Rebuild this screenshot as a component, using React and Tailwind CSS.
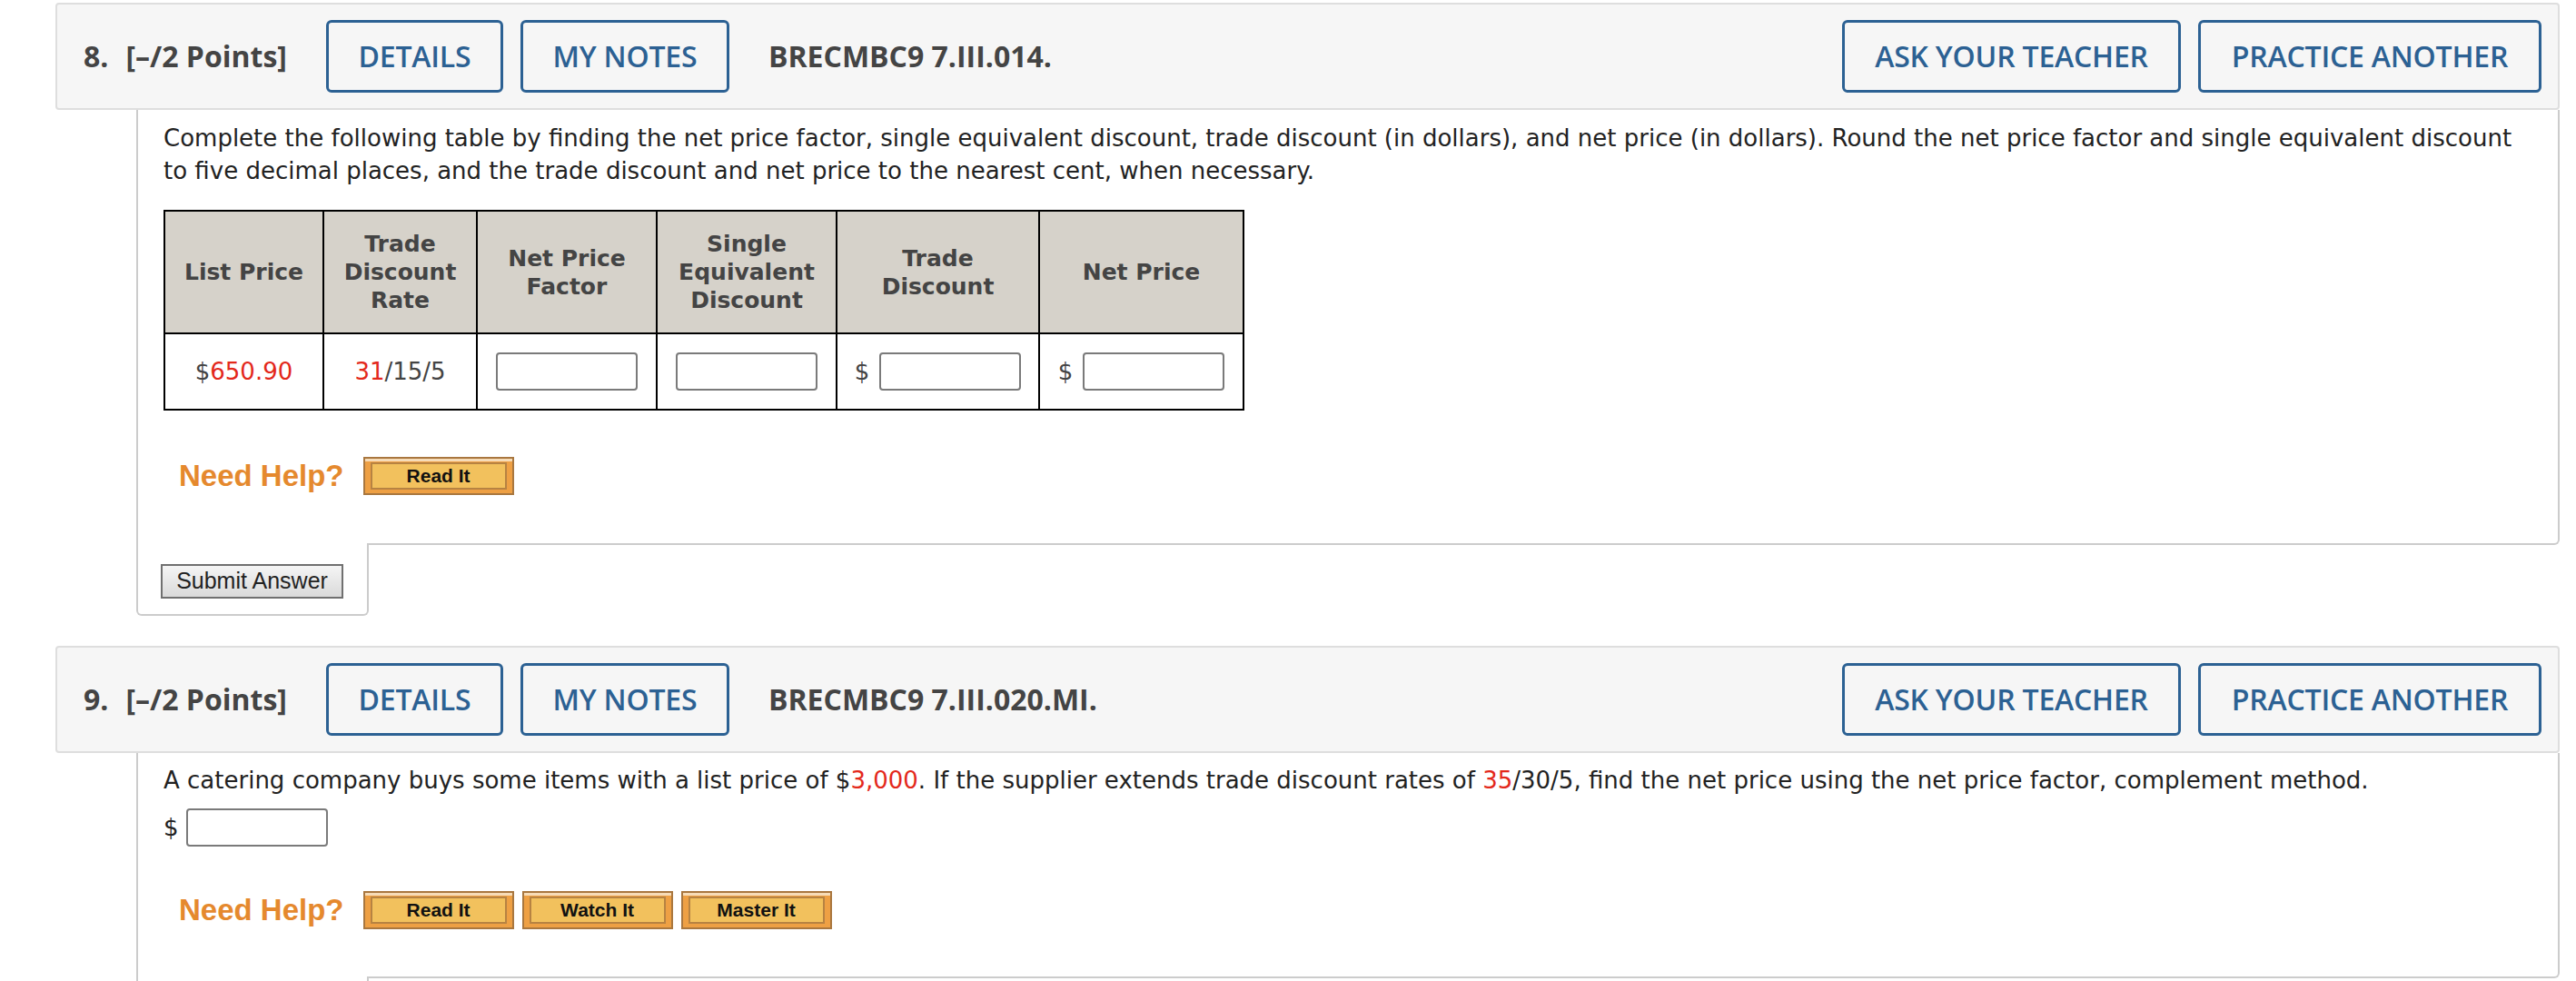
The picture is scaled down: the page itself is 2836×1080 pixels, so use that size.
import React from "react";

const RED = "text-[#e3281b]";

function OBtn({ w, children }) {
  return (
    <div
      className={`${w} h-[80px] shrink-0 flex items-center justify-center border-[3px] border-[#2c6193] rounded-[6px] text-[#2c6193] text-[32px] font-semibold font-['Open_Sans',sans-serif] tracking-[-0.2px]`}
    >
      {children}
    </div>
  );
}

function QHeader({ num, code }) {
  return (
    <div className="flex items-center h-[118px] border-2 border-[#dedede] bg-[#f6f6f6] rounded-[4px] pl-[29px] pr-[18px] font-['Open_Sans',sans-serif] text-[#444]">
      <span className="text-[32px] font-bold">{num}.</span>
      <span className="ml-[19px] text-[32px] font-bold">[–/2 Points]</span>
      <div className="ml-[43px]">
        <OBtn w="w-[195px]">DETAILS</OBtn>
      </div>
      <div className="ml-[19px]">
        <OBtn w="w-[230px]">MY NOTES</OBtn>
      </div>
      <span className="ml-[43px] text-[32px] font-bold">{code}</span>
      <div className="ml-auto flex gap-[19px]">
        <OBtn w="w-[373px]">ASK YOUR TEACHER</OBtn>
        <OBtn w="w-[378px]">PRACTICE ANOTHER</OBtn>
      </div>
    </div>
  );
}

function HelpBtn({ children }) {
  return (
    <div className="w-[166px] h-[42px] border-2 border-[#a9773f] bg-[#eea044] shadow-[inset_0_3px_0_#f6dcb8] px-[6px] pt-[4px] pb-[4px] shrink-0">
      <div className="h-full border-2 border-[#b78342] bg-[#f2c15d] flex items-center justify-center font-['Liberation_Sans',Arial,sans-serif] font-bold text-[21px] text-[#111]">
        {children}
      </div>
    </div>
  );
}

function NeedHelp({ buttons }) {
  return (
    <div className="flex items-center ml-[17px]">
      <span className="font-['Liberation_Sans',Arial,sans-serif] font-bold text-[33px] leading-[42px] text-[#e5892e] mr-[21px]">
        Need Help?
      </span>
      <div className="flex gap-[9px]">
        {buttons.map((b) => (
          <HelpBtn key={b}>{b}</HelpBtn>
        ))}
      </div>
    </div>
  );
}

function Input({ w = "w-[156px]" }) {
  return (
    <span
      className={`inline-block align-middle ${w} h-[42px] border-2 border-[#7a7a7a] rounded-[4px] bg-white`}
    ></span>
  );
}

function Submit() {
  return (
    <div className="w-[201px] h-[38px] border-2 border-[#707070] bg-gradient-to-b from-[#f5f5f5] to-[#dadada] flex items-center justify-center font-['Liberation_Sans',Arial,sans-serif] text-[25px] text-[#222]">
      Submit Answer
    </div>
  );
}

function Table() {
  const th =
    "border-2 border-black bg-[#d6d2ca] text-[#444] font-bold text-[25px] leading-[31px] text-center align-middle";
  const td = "border-2 border-black text-center align-middle text-[#444] text-[26px]";
  return (
    <table className="table-fixed border-collapse border-2 border-black w-[1190px] mt-[25px]">
      <colgroup>
        <col className="w-[175px]" />
        <col className="w-[169px]" />
        <col className="w-[198px]" />
        <col className="w-[198px]" />
        <col className="w-[223px]" />
        <col className="w-[225px]" />
      </colgroup>
      <thead>
        <tr className="h-[135px]">
          <th className={th}>List Price</th>
          <th className={th}>
            Trade
            <br />
            Discount
            <br />
            Rate
          </th>
          <th className={th}>
            Net Price
            <br />
            Factor
          </th>
          <th className={th}>
            Single
            <br />
            Equivalent
            <br />
            Discount
          </th>
          <th className={th}>
            Trade
            <br />
            Discount
          </th>
          <th className={th}>Net Price</th>
        </tr>
      </thead>
      <tbody>
        <tr className="h-[84px]">
          <td className={td}>
            $<span className={RED}>650.90</span>
          </td>
          <td className={td}>
            <span className={RED}>31</span>/15/5
          </td>
          <td className={td}>
            <Input />
          </td>
          <td className={td}>
            <Input />
          </td>
          <td className={td}>
            <span className="align-middle">$</span>
            <span className="inline-block w-[11px]"></span>
            <Input />
          </td>
          <td className={td}>
            <span className="align-middle">$</span>
            <span className="inline-block w-[11px]"></span>
            <Input />
          </td>
        </tr>
      </tbody>
    </table>
  );
}

export default function App() {
  return (
    <div className="h-[1080px] overflow-hidden bg-white pl-[61px] pr-[18px] pt-[3px] font-['DejaVu_Sans',Verdana,sans-serif]">
      {/* Question 8 */}
      <QHeader num="8" code="BRECMBC9 7.III.014." />
      <div className="ml-[89px]">
        <div className="border-2 border-t-0 border-[#cccccc] rounded-br-[6px] pl-[28px] pr-[26px] pt-[13px] pb-[53px]">
          <p className="text-[26px] leading-[36px] text-[#222]">
            Complete the following table by finding the net price factor, single equivalent discount, trade
            discount (in dollars), and net price (in dollars). Round the net price factor and single equivalent
            discount to five decimal places, and the trade discount and net price to the nearest cent, when
            necessary.
          </p>
          <Table />
          <div className="mt-[51px]">
            <NeedHelp buttons={["Read It"]} />
          </div>
        </div>
        <div className="relative w-[256px] -mt-[2px] border-2 border-t-0 border-[#cccccc] rounded-b-[6px] bg-white pl-[25px] pt-[23px] pb-[17px]">
          <Submit />
        </div>
      </div>

      {/* Question 9 */}
      <div className="mt-[33px]">
        <QHeader num="9" code="BRECMBC9 7.III.020.MI." />
      </div>
      <div className="ml-[89px]">
        <div className="border-2 border-t-0 border-[#cccccc] rounded-br-[6px] pl-[28px] pr-[26px] pt-[12px] pb-[52px]">
          <p className="text-[26px] leading-[36px] text-[#222]">
            A catering company buys some items with a list price of $<span className={RED}>3,000</span>. If the
            supplier extends trade discount rates of <span className={RED}>35</span>/30/5, find the net price
            using the net price factor, complement method.
          </p>
          <div className="mt-[13px] flex items-center text-[26px] text-[#222]">
            <span>$</span>
            <span className="ml-[8px]">
              <Input />
            </span>
          </div>
          <div className="mt-[49px]">
            <NeedHelp buttons={["Read It", "Watch It", "Master It"]} />
          </div>
        </div>
        <div className="relative w-[256px] h-[80px] -mt-[2px] border-2 border-t-0 border-[#cccccc] rounded-b-[6px] bg-white"></div>
      </div>
    </div>
  );
}
